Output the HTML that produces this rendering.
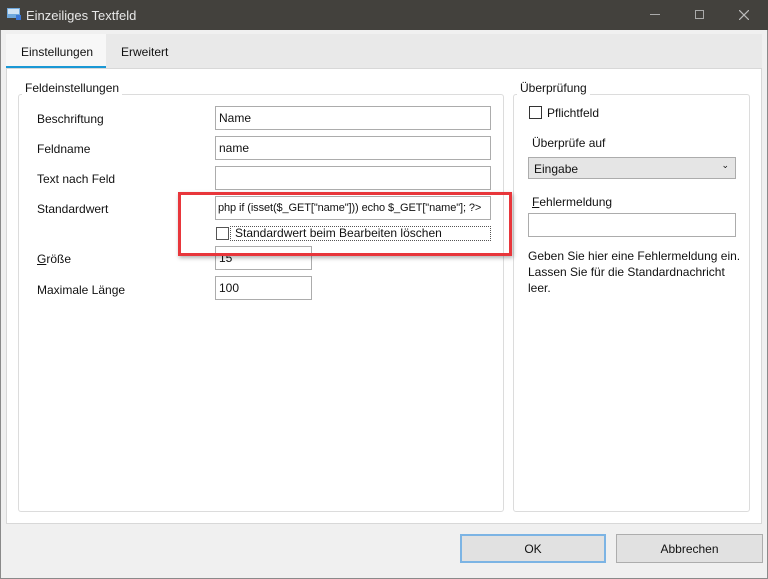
<!DOCTYPE html>
<html><head><meta charset="utf-8"><style>
*{margin:0;padding:0;box-sizing:border-box}
body{width:768px;height:579px;background:#f0f0f0;font-family:"Liberation Sans",sans-serif;font-size:12px;color:#111;position:relative;overflow:hidden}
.a{position:absolute}
.inp{position:absolute;background:#fff;border:1px solid #acacac;height:24px;padding:4px 3px;font-size:12px;white-space:nowrap;overflow:hidden}
.lbl{position:absolute;left:37px;font-size:12px}
.cb{position:absolute;width:13px;height:13px;border:1px solid #333;background:#fff}
.grp{position:absolute;border:1px solid #dcdcdc;border-radius:3px}
.gt{position:absolute;background:#fff;padding:0 3px;font-size:12px}
.btn{position:absolute;height:29px;background:#e1e1e1;border:1px solid #adadad;text-align:center;line-height:29px;font-size:12px}
</style></head><body>
<div class="a" style="left:0;top:0;width:768px;height:30px;background:#43413d"></div>
<svg class="a" style="left:7px;top:8px" width="15" height="13"><rect x="0" y="0" width="13" height="10" fill="#6fa8dc"/><rect x="1" y="1" width="11" height="5" fill="#cfe2f3"/><rect x="9" y="7" width="5" height="5" fill="#3c78d8"/></svg>
<div class="a" style="left:26px;top:8px;color:#e8e8e8;font-size:13px">Einzeiliges Textfeld</div>
<div class="a" style="left:650px;top:14px;width:10px;height:1px;background:#aaa"></div>
<div class="a" style="left:695px;top:10px;width:9px;height:9px;border:1px solid #aaa"></div>
<svg class="a" style="left:739px;top:10px" width="10" height="10"><path d="M0 0L10 10M10 0L0 10" stroke="#bbb" stroke-width="1.2"/></svg>
<div class="a" style="left:0;top:30px;width:768px;height:549px;border:1px solid #8a8a8a;border-top:none"></div>
<div class="a" style="left:6px;top:34px;width:756px;height:34px;background:#e9e9e9"></div>
<div class="a" style="left:6px;top:34px;width:100px;height:35px;background:#f7f7f7;border-bottom:3px solid #1a98d5"></div>
<div class="a" style="left:21px;top:45px">Einstellungen</div>
<div class="a" style="left:121px;top:45px">Erweitert</div>
<div class="a" style="left:6px;top:68px;width:756px;height:456px;background:#fff;border:1px solid #d8d8d8"></div>
<div class="grp" style="left:18px;top:94px;width:486px;height:418px"></div>
<div class="gt" style="left:22px;top:81px">Feldeinstellungen</div>
<div class="grp" style="left:513px;top:94px;width:237px;height:418px"></div>
<div class="gt" style="left:517px;top:81px">Überprüfung</div>
<div class="lbl" style="top:112px">Beschriftung</div>
<div class="lbl" style="top:142px">Feldname</div>
<div class="lbl" style="top:172px">Text nach Feld</div>
<div class="lbl" style="top:202px">Standardwert</div>
<div class="lbl" style="top:252px"><u>G</u>röße</div>
<div class="lbl" style="top:283px">Maximale Länge</div>
<div class="inp" style="left:215px;top:106px;width:276px">Name</div>
<div class="inp" style="left:215px;top:136px;width:276px">name</div>
<div class="inp" style="left:215px;top:166px;width:276px"></div>
<div class="inp" style="left:215px;top:196px;width:276px;font-size:11px;padding:5px 2px;letter-spacing:-0.1px">php if (isset($_GET["name"])) echo $_GET["name"]; ?&gt;</div>
<div class="cb" style="left:216px;top:227px;border-color:#555"></div>
<div class="a" style="left:230px;top:226px;width:261px;height:15px;border:1px dotted #555;padding-left:4px;line-height:13px">Standardwert beim Bearbeiten löschen</div>
<div class="inp" style="left:215px;top:246px;width:97px">15</div>
<div class="inp" style="left:215px;top:276px;width:97px">100</div>
<div class="a" style="left:178px;top:192px;width:334px;height:64px;border:3px solid #e8363b;box-shadow:1px 2px 4px rgba(0,0,0,.3)"></div>
<div class="cb" style="left:529px;top:106px"></div>
<div class="a" style="left:547px;top:106px">Pflichtfeld</div>
<div class="a" style="left:532px;top:136px">Überprüfe auf</div>
<div class="a" style="left:528px;top:157px;width:208px;height:22px;background:#e5e5e5;border:1px solid #acacac;padding:4px 5px">Eingabe<span style="position:absolute;right:6px;top:2px;font-size:9px">⌄</span></div>
<div class="a" style="left:532px;top:195px"><u>F</u>ehlermeldung</div>
<div class="inp" style="left:528px;top:213px;width:208px;height:24px"></div>
<div class="a" style="left:528px;top:248px;line-height:16px">Geben Sie hier eine Fehlermeldung ein.<br>Lassen Sie für die Standardnachricht<br>leer.</div>
<div class="btn" style="left:460px;top:534px;width:146px;border:2px solid #7cb4e4;line-height:27px">OK</div>
<div class="btn" style="left:616px;top:534px;width:147px">Abbrechen</div>
</body></html>
